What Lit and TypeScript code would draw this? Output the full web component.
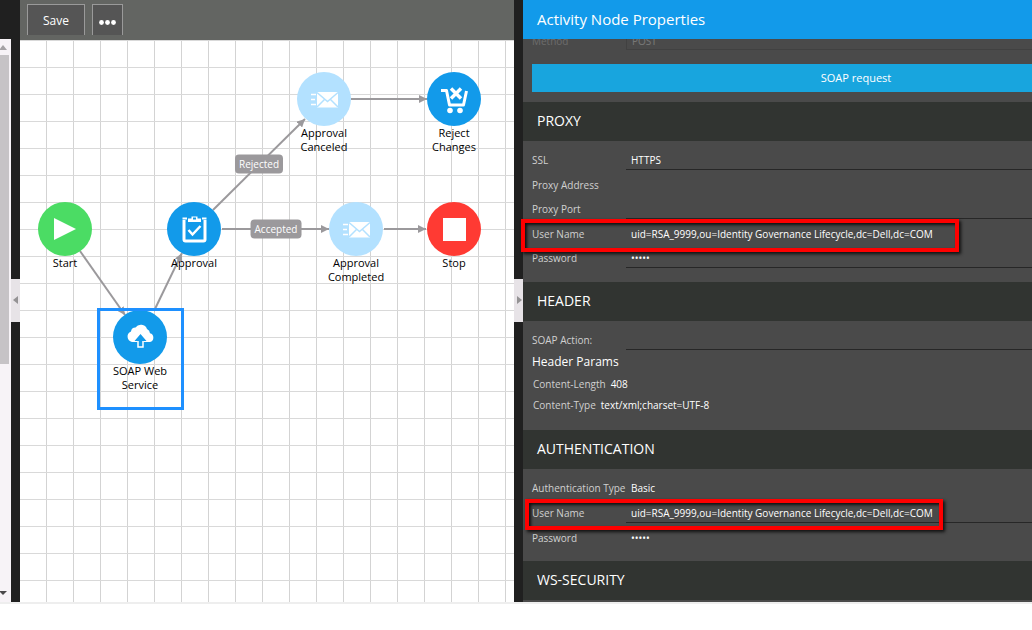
import { LitElement, html, svg, css } from "lit";
import { customElement, property } from "lit/decorators.js";
import { classMap } from "lit/directives/class-map.js";
import { styleMap } from "lit/directives/style-map.js";

type Kind = "start" | "stop" | "task" | "mail" | "cart" | "cloud";

interface FlowNode {
  kind: Kind;
  label: string;
  x: number;
  y: number;
  selected?: boolean;
}

const NODES: FlowNode[] = [
  { kind: "start", label: "Start", x: 45, y: 189 },
  { kind: "task", label: "Approval", x: 174, y: 189 },
  { kind: "mail", label: "Approval Canceled", x: 304, y: 59 },
  { kind: "cart", label: "Reject Changes", x: 434, y: 59 },
  { kind: "mail", label: "Approval Completed", x: 336, y: 189 },
  { kind: "stop", label: "Stop", x: 434, y: 189 },
  { kind: "cloud", label: "SOAP Web Service", x: 120, y: 297, selected: true },
];

const EDGES = [
  [60, 211, 105, 275],
  [134, 271, 162, 213],
  [193, 170, 285, 79],
  [202, 189, 309, 189],
  [364, 189, 406, 189],
  [331, 59, 407, 59],
];

const TAGS = [
  { text: "Rejected", x: 239, y: 124 },
  { text: "Accepted", x: 256, y: 189 },
];

const ICONS = {
  start: svg`<path d="M16 16 L38 27 L16 38Z" fill="#fff"/>`,
  stop: svg`<rect x="16" y="16" width="23" height="23" fill="#fff"/>`,
  task: svg`
    <path d="M17 18V37.500Q17 39 18.500 39H36.500Q38 39 38 37.500V18" fill="none" stroke="#fff" stroke-width="3"/>
    <path d="M15.500 16.500H20M35 16.500H39.500" stroke="#fff" stroke-width="2"/>
    <path d="M21 20V16.500H24.500V14.500H30.500V16.500H34V20Z" fill="#fff"/>
    <rect x="26" y="15.500" width="3" height="2" fill="#129aea"/>
    <path d="M21.500 28L25.500 32.500L33.500 24" fill="none" stroke="#fff" stroke-width="2.500"/>`,
  mail: svg`
    <rect x="20" y="20" width="21" height="15.500" fill="#fff"/>
    <path d="M20 20.500L30.500 29.500L41 20.500M20 35L27.500 27.500M41 35L33.500 27.500" fill="none" stroke="#b3e1ff" stroke-width="1.500"/>
    <path d="M14 22.500H19M14 27.500H18M14 32.500H19" stroke="#fff" stroke-width="1.500"/>`,
  cart: svg`
    <path d="M14 18.500H19.500L22.500 33H36.500L39.500 19" fill="none" stroke="#fff" stroke-width="3" stroke-linejoin="round"/>
    <path d="M24 16.500L34 26.500M34 16.500L24 26.500" stroke="#fff" stroke-width="3.500"/>
    <circle cx="23" cy="38.500" r="2.800" fill="#fff"/><circle cx="33" cy="38.500" r="2.800" fill="#fff"/>`,
  cloud: svg`
    <path d="M19 32A5.500 5.500 0 0 1 18 21.500A4.500 4.500 0 0 1 22.500 17.500A6.500 6.500 0 0 1 34 19A5 5 0 0 1 37 23.300A4.500 4.500 0 0 1 37 32Z" fill="#fff"/>
    <path d="M27.500 24L33.500 31H30.500V36.500H24.500V31H21.500Z" fill="#129aea"/>
    <path d="M25 31V37H30V31" fill="none" stroke="#fff" stroke-width="1.500"/>`,
};

@customElement("flow-canvas")
export class FlowCanvas extends LitElement {
  static styles = css`
    :host {
      display: block;
      position: relative;
      overflow: hidden;
      background-color: #fff;
      background-image: linear-gradient(#d9d9d9 1px, transparent 1px),
        linear-gradient(90deg, #d3d3d3 1px, transparent 1px);
      background-size: 27px 27px;
      background-position: 26px 0;
    }
    .edges {
      position: absolute;
      inset: 0;
      width: 100%;
      height: 100%;
    }
    .node {
      position: absolute;
      width: 80px;
      margin-left: -40px;
      margin-top: -27px;
      display: flex;
      flex-direction: column;
      align-items: center;
      text-align: center;
      font-size: 11px;
      line-height: 14px;
      color: #000;
    }
    .disc {
      width: 54px;
      height: 54px;
      border-radius: 50%;
      background: #129aea;
    }
    .start .disc { background: #4bdc64; }
    .stop .disc { background: #ff3a33; }
    .mail .disc { background: #b3e1ff; }
    .label { width: 64px; }
    .selected::before {
      content: "";
      position: absolute;
      left: -3px;
      top: -2px;
      width: 81px;
      height: 96px;
      border: 3px solid #1e90ff;
    }
    .tag {
      position: absolute;
      transform: translate(-50%, -50%);
      padding: 0 4px;
      border-radius: 4px;
      background: #9b999c;
      color: #fff;
      font-size: 10px;
      line-height: 19px;
    }
  `;

  render() {
    return html`
      <svg class="edges">
        <defs>
          <marker id="tip" viewBox="0 0 8 8" refX="8" refY="4" markerWidth="8" markerHeight="8"
            markerUnits="userSpaceOnUse" orient="auto">
            <path d="M0 0L8 4L0 8Z" fill="#9b999c" />
          </marker>
        </defs>
        ${EDGES.map(
          ([x1, y1, x2, y2]) => svg`<line x1=${x1} y1=${y1} x2=${x2} y2=${y2}
            stroke="#9b999c" stroke-width="2" marker-end="url(#tip)"/>`
        )}
      </svg>
      ${NODES.map(
        (n) => html`<div
          class=${classMap({ node: true, [n.kind]: true, selected: !!n.selected })}
          style=${styleMap({ left: `${n.x}px`, top: `${n.y}px` })}
        >
          <svg class="disc" viewBox="0 0 54 54" aria-hidden="true">${ICONS[n.kind]}</svg>
          <div class="label">${n.label}</div>
        </div>`
      )}
      ${TAGS.map(
        (t) => html`<div class="tag" style=${styleMap({ left: `${t.x}px`, top: `${t.y}px` })}>${t.text}</div>`
      )}
    `;
  }
}

@customElement("prop-row")
export class PropRow extends LitElement {
  @property() label = "";
  @property() value = "";
  @property() type = "text";
  @property({ type: Boolean, reflect: true }) line = false;
  @property({ type: Boolean, reflect: true }) faded = false;

  static styles = css`
    :host { display: block; }
    .row {
      display: flex;
      height: 24px;
      padding-left: 9px;
      font-size: 10px;
    }
    label {
      width: 94px;
      padding-top: 8px;
      line-height: 14px;
      color: #d0d0d0;
    }
    input {
      flex: 1;
      min-width: 0;
      box-sizing: border-box;
      margin: 0;
      padding: 7px 5px 1px;
      border: 0;
      outline: 0;
      background: none;
      color: #fff;
      font: inherit;
      line-height: 16px;
    }
    :host([line]) input {
      height: 25px;
      border-bottom: 1px solid #272727;
    }
    :host([line]) .row { height: 25px; }
    :host([faded]) .row { opacity: 0.25; }
    :host([faded]) label { padding-top: 9px; }
    :host([faded]) input {
      padding-top: 9px;
      border-left: 1px solid #272727;
    }
  `;

  render() {
    return html`<div class="row">
      <label for="field">${this.label}</label>
      <input id="field" type=${this.type} .value=${this.value} />
    </div>`;
  }
}

const USER = "uid=RSA_9999,ou=Identity Governance Lifecycle,dc=Dell,dc=COM";

@customElement("app-root")
export class AppRoot extends LitElement {
  static styles = css`
    :host {
      display: flex;
      flex-direction: column;
      box-sizing: border-box;
      height: 100vh;
      padding-bottom: 26px;
      background: #fff;
      font-family: "Open Sans", "Noto Sans", sans-serif;
    }
    .app {
      flex: 1;
      min-height: 0;
      display: flex;
      border-bottom: 2px solid #eee;
      background: #202020;
    }
    .rail {
      width: 11px;
      margin-top: 39px;
      display: flex;
      flex-direction: column;
      justify-content: space-between;
      background: #f7f3f7;
    }
    .rail svg { width: 11px; height: 16px; }
    .thumb { width: 9px; height: 309px; background: #c6c3c6; }
    .spacer { flex: 1; }
    .split {
      width: 9px;
      box-sizing: border-box;
      padding-bottom: 2px;
      display: flex;
      align-items: center;
    }
    .split button {
      width: 9px;
      height: 43px;
      padding: 0;
      border: 0;
      background: #e7e3e7;
    }
    .split svg { display: block; width: 9px; height: 12px; }
    .work {
      width: 494px;
      display: flex;
      flex-direction: column;
    }
    .toolbar {
      display: flex;
      gap: 7px;
      height: 36px;
      padding: 4px 7px 0;
      background: #636562;
    }
    .toolbar button {
      box-sizing: border-box;
      width: 31px;
      height: 31px;
      padding: 0;
      border: 1px solid #9a9a9a;
      border-bottom: 0;
      background: #555;
      color: #fff;
      font: 12px "Open Sans", sans-serif;
    }
    .toolbar .save { width: 58px; }
    .toolbar svg { display: block; margin: 4px auto 0; }
    flow-canvas { flex: 1; }
    .side {
      flex: 1;
      min-width: 0;
      position: relative;
    }
    .panel {
      height: 100%;
      display: flex;
      flex-direction: column;
      overflow: hidden;
      background: #4a4a4a;
      color: #fff;
    }
    h1 {
      margin: 0;
      padding-left: 14px;
      flex: none;
      background: #129aea;
      font-size: 15px;
      font-weight: 400;
      line-height: 39px;
    }
    .scroll {
      flex: 1;
      min-height: 0;
      overflow: hidden;
    }
    .content {
      min-width: 666px;
      margin-top: -14px;
    }
    .request {
      display: block;
      width: calc(100% - 18px);
      height: 28px;
      margin: 14px 9px 10px;
      padding: 0 0 2px;
      border: 0;
      background: #18a5de;
      color: #fff;
      font: 11px "Open Sans", sans-serif;
    }
    h2 {
      margin: 0;
      padding: 0 14px 2px;
      background: #313431;
      font-size: 14px;
      font-weight: 400;
      line-height: 37px;
    }
    .fields { padding: 4px 0 14px; }
    h3 {
      margin: 0;
      padding: 4px 9px;
      font-size: 12px;
      font-weight: 400;
      line-height: 16px;
    }
    dl {
      margin: 0;
      padding: 0 10px;
      font-size: 10px;
      line-height: 21px;
    }
    dl div { display: flex; gap: 5px; }
    dt { color: #d0d0d0; }
    dd { margin: 0; }
    .mark {
      position: absolute;
      box-sizing: border-box;
      border: 4px solid #f00;
      box-shadow: 2px 2px 3px #111, inset 2px 2px 3px #111;
      pointer-events: none;
    }
    .proxy-user { left: -2px; top: 219px; width: 438px; height: 33px; }
    .auth-user { left: 2px; top: 499px; width: 418px; height: 31px; }
    .spaced { padding-bottom: 1px; }
  `;

  private row(label: string, value = "", line = false, type = "text") {
    return html`<prop-row label=${label} value=${value} type=${type} ?line=${line}></prop-row>`;
  }

  render() {
    return html`
      <div class="app">
        <div class="rail">
          <svg viewBox="0 0 11 16"><path d="M-1 11L3 6L7 11Z" fill="#a5a2a5" /></svg>
          <div class="thumb"></div>
          <div class="spacer"></div>
          <svg viewBox="0 0 11 16"><path d="M-1 5L3 9L7 5Z" fill="#4a494a" /></svg>
        </div>
        <div class="split">
          <button aria-label="Collapse left panel">
            <svg viewBox="0 0 9 12"><path d="M7 2V10L2 6Z" fill="#949294" /></svg>
          </button>
        </div>
        <main class="work">
          <div class="toolbar">
            <button class="save">Save</button>
            <button aria-label="More">
              <svg width="17" height="5" viewBox="0 0 17 5" fill="#fff">
                <circle cx="2.500" cy="2.500" r="2.400" /><circle cx="8.500" cy="2.500" r="2.400" /><circle cx="14.500" cy="2.500" r="2.400" />
              </svg>
            </button>
          </div>
          <flow-canvas></flow-canvas>
        </main>
        <div class="split">
          <button aria-label="Collapse right panel">
            <svg viewBox="0 0 9 12"><path d="M3 2V10L8 6Z" fill="#949294" /></svg>
          </button>
        </div>
        <aside class="side">
          <div class="panel">
            <h1>Activity Node Properties</h1>
            <div class="scroll">
              <div class="content">
                <prop-row label="Method" value="POST" line faded></prop-row>
                <button class="request">SOAP request</button>
                <h2>PROXY</h2>
                <div class="fields">
                  ${this.row("SSL", "HTTPS", true)} ${this.row("Proxy Address")}
                  ${this.row("Proxy Port", "", true)} ${this.row("User Name", USER)}
                  ${this.row("Password", "12345", true, "password")}
                </div>
                <h2>HEADER</h2>
                <div class="fields">
                  ${this.row("SOAP Action:", "", true)}
                  <h3>Header Params</h3>
                  <dl>
                    <div><dt>Content-Length</dt><dd>408</dd></div>
                    <div><dt>Content-Type</dt><dd>text/xml;charset=UTF-8</dd></div>
                  </dl>
                </div>
                <h2>AUTHENTICATION</h2>
                <div class="fields">
                  <div class="spaced">${this.row("Authentication Type", "Basic")}</div>
                  ${this.row("User Name", USER, true)}
                  ${this.row("Password", "12345", false, "password")}
                </div>
                <h2>WS-SECURITY</h2>
                <div class="fields"></div>
              </div>
            </div>
          </div>
          <div class="mark proxy-user"></div>
          <div class="mark auth-user"></div>
        </aside>
      </div>
    `;
  }
}
